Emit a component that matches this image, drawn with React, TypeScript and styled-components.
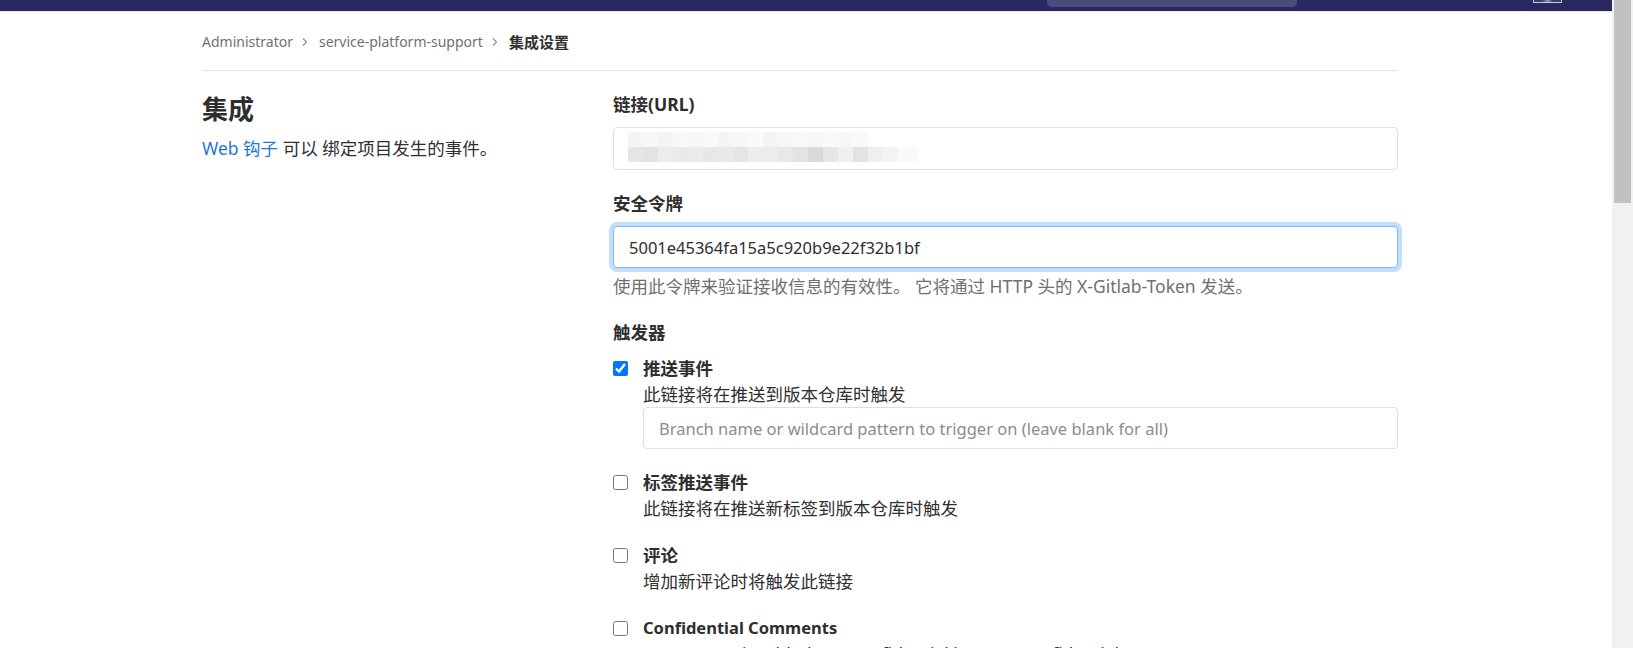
import React from 'react';
import styled, { createGlobalStyle } from 'styled-components';

const GlobalStyle = createGlobalStyle`
  html, body {
    margin: 0;
    padding: 0;
    background: #fff;
  }
  body {
    font-family: "Noto Sans", "Noto Sans CJK SC", sans-serif;
    font-size: 17.5px;
    color: #303030;
  }
  * {
    box-sizing: border-box;
  }
`;

const Page = styled.div`
  display: flex;
  width: 100%;
  height: 100vh;
  overflow: hidden;
`;

const Main = styled.div`
  flex: 1;
  min-width: 0;
  display: flex;
  flex-direction: column;
`;

const TopBar = styled.header`
  height: 12px;
  flex-shrink: 0;
  background: #292961;
  border-bottom: 1px solid #e8e8ee;
  display: flex;
  justify-content: flex-end;
  align-items: flex-start;
  gap: 236px;
  padding-right: 50px;
`;

const SearchBox = styled.div`
  width: 250px;
  height: 7px;
  background: #4b4b7d;
  border-radius: 0 0 5px 5px;
`;

const AvatarStub = styled.div`
  width: 29px;
  height: 3px;
  border: 1px solid #c8c8d8;
  border-top: none;
  background: linear-gradient(90deg, #3a3a70 30%, #8f8fc0 50%, #3a3a70 70%);
`;

const Container = styled.div`
  width: 1196px;
  margin-left: 202px;
`;

const Breadcrumbs = styled.nav`
  height: 59px;
  display: flex;
  align-items: center;
  border-bottom: 1px solid #e5e5e5;
  padding-top: 1px;
`;

const Crumb = styled.span<{ $current?: boolean }>`
  font-size: ${p => (p.$current ? 15 : 14)}px;
  color: ${p => (p.$current ? '#303030' : '#707070')};
  font-weight: ${p => (p.$current ? 700 : 400)};
`;

const Sep = styled.span`
  display: inline-flex;
  margin: 0 11px 0 9px;
  color: #8a8a8a;
`;

const Layout = styled.div`
  display: grid;
  grid-template-columns: 411px 785px;
  padding-top: 21px;
`;

const Side = styled.div`
  display: flex;
  flex-direction: column;
`;

const Title = styled.h4`
  margin: 1px 0 0;
  font-size: 26px;
  line-height: 32px;
  font-weight: 700;
  color: #2e2e2e;
`;

const Lead = styled.p`
  margin: 11px 0 0;
  line-height: 24px;
`;

const Link = styled.a`
  color: #1f78d1;
  text-decoration: none;
`;

const Form = styled.div`
  display: flex;
  flex-direction: column;
`;

const Label = styled.label<{ $gap?: number }>`
  display: block;
  margin-top: ${p => p.$gap ?? 0}px;
  line-height: 24px;
  font-weight: 700;
  color: #2e2e2e;
`;

const Field = styled.input<{ $focused?: boolean }>`
  display: block;
  width: 100%;
  height: 42px;
  margin-top: 11px;
  padding: 0 15px;
  font-family: inherit;
  font-size: 16.5px;
  color: #2e2e2e;
  background: #fff;
  border: 1px solid ${p => (p.$focused ? '#80b6f2' : '#dfdfdf')};
  border-radius: 4px;
  box-shadow: ${p => (p.$focused ? '0 0 0 4px #c3defb' : 'none')};
  outline: none;

  &::placeholder {
    color: #8c8c8c;
  }
`;

const RedactedField = styled.div`
  height: 43px;
  margin-top: 11px;
  border: 1px solid #dfdfdf;
  border-radius: 4px;
  display: flex;
  align-items: flex-start;
  padding: 4px 0 0 14px;
`;

const Help = styled.p`
  margin: 6px 0 0;
  line-height: 24px;
  color: #707070;
`;

const Trigger = styled.div<{ $gap: number }>`
  display: grid;
  grid-template-columns: 30px 1fr;
  margin-top: ${p => p.$gap}px;
`;

const Check = styled.input`
  width: 15px;
  height: 15px;
  margin: 6px 0 0 0;
`;

const TriggerBody = styled.div`
  display: flex;
  flex-direction: column;
`;

const TriggerName = styled.span<{ $latin?: boolean }>`
  font-size: ${p => (p.$latin ? 16.5 : 17.5)}px;
  line-height: 26px;
  font-weight: 700;
  color: #2e2e2e;
`;

const TriggerHint = styled.span`
  margin-top: 1px;
  line-height: 24px;
  color: #303030;
`;

const BranchField = styled(Field)`
  margin-top: 1px;
`;

const ScrollTrack = styled.div`
  width: 21px;
  flex-shrink: 0;
  background: #f1f1f1;
  padding: 0 2px 0 2px;
`;

const ScrollThumb = styled.div`
  height: 203px;
  background: #c1c1c1;
`;

const Chevron = () => (
  <svg width="6" height="10" viewBox="0 0 6 10" fill="none">
    <path d="M1 1.5 4.5 5 1 8.5" stroke="currentColor" strokeWidth="1.1" />
  </svg>
);

const bottomShades = [
  '#e6e6e6', '#e3e3e3', '#ececec', '#e9e9e9', '#ebebeb', '#e7e7e7',
  '#e9e9e9', '#e5e5e5', '#ececec', '#ececec', '#e8e8e8', '#e3e3e3',
  '#dadada', '#e6e6e6', '#f0f0f0', '#e3e3e3', '#efefef', '#f3f3f3',
];
const topShades = [
  '#f5f5f5', '#f7f7f7', '#f4f4f4', '#f8f8f8', '#f6f6f6', '#f9f9f9',
  '#f5f5f5', '#f7f7f7', '#fafafa', '#f4f4f4', '#f6f6f6', '#f8f8f8',
  '#f6f6f6', '#f9f9f9', '#f7f7f7', '#fafafa',
];

// the URL is pixelated in the reference, so draw the mosaic
const Mosaic = () => (
  <svg width="300" height="32" viewBox="0 0 300 32">
    {topShades.map((c, i) => (
      <rect key={`t${i}`} x={i * 15} y={0} width={15} height={15} fill={c} />
    ))}
    {bottomShades.map((c, i) => (
      <rect key={`b${i}`} x={i * 15} y={15} width={15} height={15} fill={c} />
    ))}
    <rect x={270} y={15} width={20} height={15} fill="#fafafa" />
  </svg>
);

const triggers = [
  { name: '推送事件', hint: '此链接将在推送到版本仓库时触发', checked: true, branch: true },
  { name: '标签推送事件', hint: '此链接将在推送新标签到版本仓库时触发' },
  { name: '评论', hint: '增加新评论时将触发此链接' },
  { name: 'Confidential Comments', hint: 'A comment is added to a confidential issue or confidential merge request', latin: true },
];

const gapBefore = (i: number) => (i === 0 ? 11 : i === 1 ? 20 : 22);

const App: React.FC = () => {
  return (
    <>
      <GlobalStyle />
      <Page>
        <Main>
          <TopBar>
            <SearchBox />
            <AvatarStub />
          </TopBar>
          <Container>
            <Breadcrumbs>
              <Crumb>Administrator</Crumb>
              <Sep><Chevron /></Sep>
              <Crumb>service-platform-support</Crumb>
              <Sep><Chevron /></Sep>
              <Crumb $current>集成设置</Crumb>
            </Breadcrumbs>
            <Layout>
              <Side>
                <Title>集成</Title>
                <Lead>
                  <Link href="#">Web 钩子</Link> 可以 绑定项目发生的事件。
                </Lead>
              </Side>
              <Form>
                <Label>链接(URL)</Label>
                <RedactedField>
                  <Mosaic />
                </RedactedField>
                <Label $gap={21}>安全令牌</Label>
                <Field $focused defaultValue="5001e45364fa15a5c920b9e22f32b1bf" />
                <Help>使用此令牌来验证接收信息的有效性。 它将通过 HTTP 头的 X-Gitlab-Token 发送。</Help>
                <Label $gap={22}>触发器</Label>
                {triggers.map((t, i) => (
                  <Trigger key={t.name} $gap={gapBefore(i)}>
                    <Check type="checkbox" defaultChecked={!!t.checked} />
                    <TriggerBody>
                      <TriggerName $latin={t.latin}>{t.name}</TriggerName>
                      <TriggerHint>{t.hint}</TriggerHint>
                      {t.branch && (
                        <BranchField placeholder="Branch name or wildcard pattern to trigger on (leave blank for all)" />
                      )}
                    </TriggerBody>
                  </Trigger>
                ))}
              </Form>
            </Layout>
          </Container>
        </Main>
        <ScrollTrack>
          <ScrollThumb />
        </ScrollTrack>
      </Page>
    </>
  );
};

export default App;
